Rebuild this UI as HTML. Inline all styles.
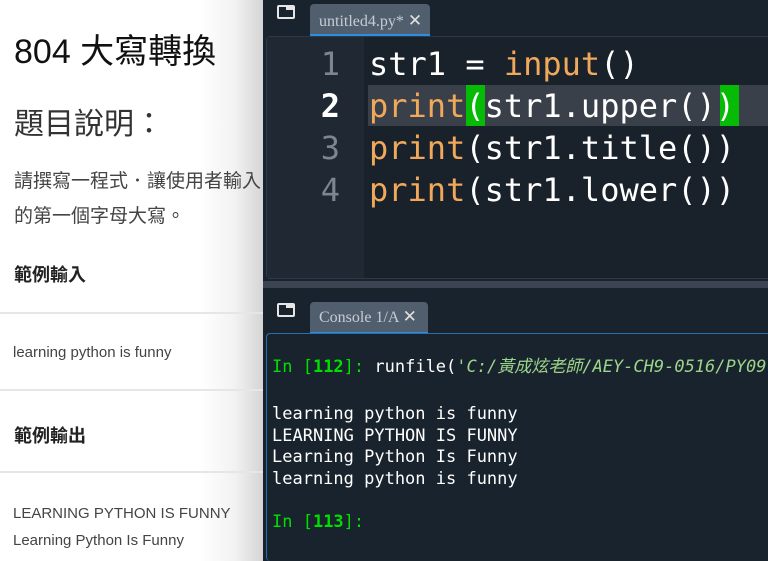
<!DOCTYPE html><html><head><meta charset="utf-8"><style>
*{margin:0;padding:0;box-sizing:border-box}
html,body{width:768px;height:561px;overflow:hidden}
body{position:relative;background:#19232d;font-family:"Liberation Sans","Noto Sans CJK TC",sans-serif}
#left{position:absolute;left:0;top:0;width:263px;height:561px;background:linear-gradient(to right,#fff 0,#fff 200px,#f2f2f2 235px,#d4d4d4 263px);overflow:hidden}
.ab{position:absolute;white-space:nowrap}
.hr{position:absolute;left:0;width:263px;height:2px;background:#e6e6e6}
.mono{font-family:"DejaVu Sans Mono","Liberation Mono","Noto Sans CJK TC",monospace}
.tab{position:absolute;background:#505e6e;border-radius:4px 4px 0 0;border-bottom:2px solid #2b8ee0;color:#c6cdd4;font-family:"Liberation Serif",serif;font-size:16px}
.ico{position:absolute;width:18px;height:14px;border:2px solid #e6e6e6;border-radius:2px}
.ico:after{content:"";position:absolute;right:0;top:0;width:7px;height:3px;background:#e6e6e6}
.pane{position:absolute;border:1px solid #2f3a47;border-radius:4px}
.code{position:absolute;left:369px;font-size:32px;color:#fff;line-height:42px}
.o{color:#f0a85a}
.ln{position:absolute;left:300px;width:40px;text-align:right;font-size:32px;color:#7c8590;line-height:42px}
.con{position:absolute;left:272px;font-size:17px;color:#fff;line-height:21.5px}
.g{color:#00e000}
</style></head><body>
<div id="left">
<div class="ab" style="left:14px;top:24px;font-size:34px;color:#111">804 大寫轉換</div>
<div class="ab" style="left:14px;top:99px;font-size:30px;color:#333">題目說明：</div>
<div class="ab" style="left:14px;top:166px;font-size:19px;color:#444">請撰寫一程式．讓使用者輸入</div>
<div class="ab" style="left:14px;top:201px;font-size:19px;color:#444">的第一個字母大寫。</div>
<div class="ab" style="left:14px;top:261px;font-size:18px;color:#222;font-weight:bold">範例輸入</div>
<div class="hr" style="top:312px"></div>
<div class="ab" style="left:13px;top:344px;font-size:15px;color:#444">learning python is funny</div>
<div class="hr" style="top:389px"></div>
<div class="ab" style="left:14px;top:422px;font-size:18px;color:#222;font-weight:bold">範例輸出</div>
<div class="hr" style="top:471px"></div>
<div class="ab" style="left:13px;top:505px;font-size:15px;color:#444">LEARNING PYTHON IS FUNNY</div>
<div class="ab" style="left:13px;top:532px;font-size:15px;color:#444">Learning Python Is Funny</div>
</div>
<div class="ico" style="left:277px;top:5px"></div>
<div class="tab" style="left:310px;top:4px;width:120px;height:32px;padding:7px 0 0 9px">untitled4.py* <span style="font-family:'DejaVu Sans';font-size:17px;color:#e0e0e0">✕</span></div>
<div class="pane" style="left:266px;top:36px;width:510px;height:243px;background:#19212b"></div>
<div style="position:absolute;left:267px;top:37px;width:97px;height:241px;background:#1f2833"></div>
<div style="position:absolute;left:368px;top:85px;width:400px;height:41px;background:#3a4049"></div>
<div style="position:absolute;left:466px;top:85px;width:19px;height:41px;background:#06bb06"></div>
<div style="position:absolute;left:720px;top:85px;width:19px;height:41px;background:#06bb06"></div>
<div class="ln mono" style="top:43px">1<br><span style="color:#fff;font-weight:bold">2</span><br>3<br>4</div>
<div class="code mono" style="top:43px">str1 = <span class="o">input</span>()<br><span class="o">print</span>(str1.upper())<br><span class="o">print</span>(str1.title())<br><span class="o">print</span>(str1.lower())</div>
<div style="position:absolute;left:263px;top:281px;width:505px;height:7px;background:#3b4450"></div>
<div class="ico" style="left:277px;top:303px"></div>
<div class="tab" style="left:310px;top:302px;width:118px;height:32px;padding:5px 0 0 9px">Console 1/A <span style="font-family:'DejaVu Sans';font-size:17px;color:#e0e0e0">✕</span></div>
<div class="pane" style="left:266px;top:333px;width:510px;height:228px;border-color:#2b6fa8;border-width:1px 0 0 1px"></div>
<div class="con mono" style="top:357px"><span class="g">In [</span><span class="g" style="font-weight:bold">112</span><span class="g">]:</span> runfile(<span style="color:#9bd48a;font-style:italic">'C:/黃成炫老師/AEY-CH9-0516/PY09</span></div>
<div class="con mono" style="top:404px">learning python is funny<br>LEARNING PYTHON IS FUNNY<br>Learning Python Is Funny<br>learning python is funny</div>
<div class="con mono" style="top:512px"><span class="g">In [</span><span class="g" style="font-weight:bold">113</span><span class="g">]:</span></div>
</body></html>
